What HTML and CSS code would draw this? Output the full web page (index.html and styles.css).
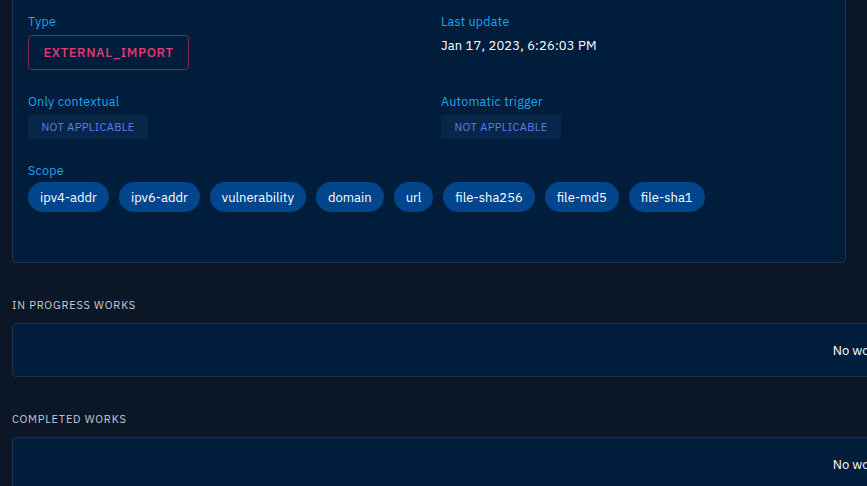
FILE: index.html
```html
<!DOCTYPE html>
<html lang="en">
<head>
<meta charset="utf-8">
<title>Connector details</title>
<link rel="stylesheet" href="styles.css">
</head>
<body>
<div class="page">
  <div class="top-row">
    <section class="card">
      <div class="grid">
        <div class="field">
          <div class="label">Type</div>
          <span class="type-chip">EXTERNAL_IMPORT</span>
        </div>
        <div class="field">
          <div class="label">Last update</div>
          <div class="value">Jan 17, 2023, 6:26:03 PM</div>
        </div>
        <div class="field">
          <div class="label">Only contextual</div>
          <span class="na-chip">NOT APPLICABLE</span>
        </div>
        <div class="field">
          <div class="label">Automatic trigger</div>
          <span class="na-chip">NOT APPLICABLE</span>
        </div>
        <div class="field full">
          <div class="label">Scope</div>
          <div class="scopes">
            <span class="scope">ipv4-addr</span>
            <span class="scope">ipv6-addr</span>
            <span class="scope">vulnerability</span>
            <span class="scope">domain</span>
            <span class="scope">url</span>
            <span class="scope">file-sha256</span>
            <span class="scope">file-md5</span>
            <span class="scope">file-sha1</span>
          </div>
        </div>
      </div>
    </section>
    <div class="side"></div>
  </div>

  <h3 class="section-title">In progress works</h3>
  <div class="panel"><span class="empty">No works</span></div>

  <h3 class="section-title second">Completed works</h3>
  <div class="panel"><span class="empty">No works</span></div>
</div>
</body>
</html>
```
FILE: styles.css
```css
html, body {
  margin: 0;
  padding: 0;
  overflow: hidden;
  background: #0b1727;
}
body {
  font-family: "IBM Plex Sans", Inter, "Noto Sans", sans-serif;
  color: #ffffff;
  width: 867px;
  height: 486px;
}
.page {
  width: 1720px;
  padding: 0 12px;
  margin-top: -7px;
}
.top-row {
  display: grid;
  grid-template-columns: 834px 1fr;
  column-gap: 12px;
}
.card {
  background: #001d3c;
  border: 1px solid #1e3352;
  border-radius: 4px;
  padding: 15px;
  height: 238px;
  box-sizing: content-box;
}
.grid {
  display: grid;
  grid-template-columns: 387px 1fr;
  column-gap: 26px;
  row-gap: 19px;
}
.field.full { grid-column: 1 / -1; }
.label {
  font-size: 12.5px;
  line-height: 16px;
  color: #1ba6ef;
  margin-bottom: 6px;
  margin-top: 4px;
  letter-spacing: 0.25px;
}
.value {
  font-size: 13px;
  line-height: 18px;
  margin-top: 8px;
  letter-spacing: 0.15px;
}
.type-chip {
  display: inline-flex;
  align-items: center;
  justify-content: center;
  height: 33px;
  width: 159px;
  border: 1px solid #7a2856;
  border-radius: 4px;
  color: #ea3a73;
  font-size: 13px;
  font-weight: 500;
  letter-spacing: 0.6px;
}
.na-chip {
  display: inline-flex;
  align-items: center;
  justify-content: center;
  height: 24px;
  width: 120px;
  background: #08264a;
  color: #5f7fe6;
  font-size: 11px;
  letter-spacing: 0.4px;
}
.scopes {
  display: flex;
  gap: 10px;
  margin-top: -2px;
}
.scope {
  display: inline-flex;
  align-items: center;
  height: 30px;
  padding: 0 12px;
  border-radius: 15px;
  background: #01468c;
  font-size: 13px;
  color: #ffffff;
}
.section-title {
  margin: 35px 0 0;
  font-size: 11px;
  font-weight: 400;
  line-height: 14px;
  text-transform: uppercase;
  color: #c9cdd5;
  letter-spacing: 0.8px;
}
.section-title.second { margin-top: 35px; }
.panel {
  margin-top: 11px;
  height: 52px;
  background: #001d3c;
  border: 1px solid #1e3352;
  border-radius: 4px;
  display: flex;
  align-items: center;
  justify-content: center;
  width: 1694px;
}
.empty {
  font-size: 13px;
  color: #ffffff;
}
```
